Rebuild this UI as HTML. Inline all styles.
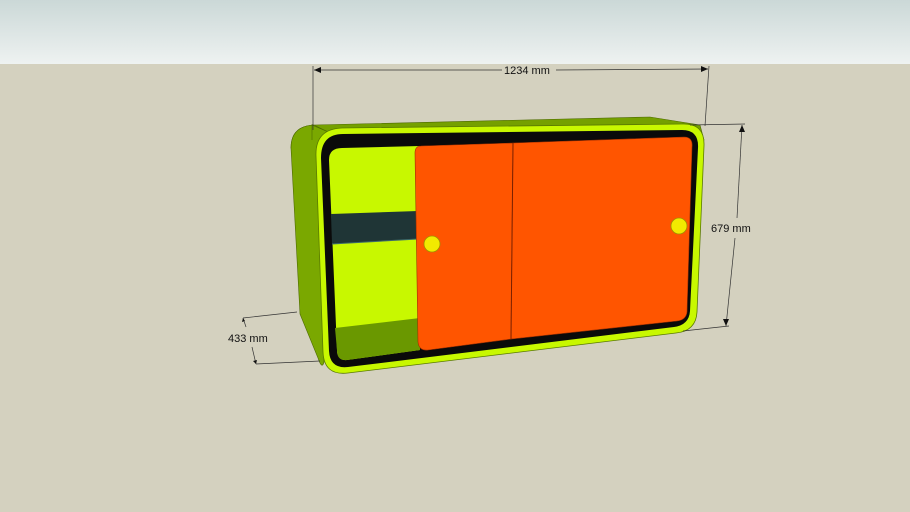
<!DOCTYPE html>
<html><head><meta charset="utf-8"><style>
html,body{margin:0;padding:0;width:910px;height:512px;overflow:hidden;background:#d4d1bf}
svg{display:block}
text{font-family:"Liberation Sans","DejaVu Sans",sans-serif;font-size:11px;fill:#111}
</style></head><body>
<svg width="910" height="512" viewBox="0 0 910 512">
<defs>
<linearGradient id="sky" x1="0" y1="0" x2="0" y2="1">
<stop offset="0" stop-color="#cbd8d7"/><stop offset="1" stop-color="#eef2f1"/>
</linearGradient>
</defs>
<rect x="0" y="0" width="910" height="64" fill="url(#sky)"/>
<rect x="0" y="64" width="910" height="448" fill="#d4d1bf"/>

<!-- top face -->
<path d="M291,148 Q291,126 314,125 L650,117 L700,125 L704,140 L316,140 Z" fill="#75a000" stroke="#4d6a00" stroke-width="0.6"/>
<!-- left side face -->
<path d="M291,148 Q291,126 314,125 L330,133 L318,150 L324,362 Q322,370 318,358 L300,314 Z" fill="#7aa800" stroke="#4d6a00" stroke-width="0.6"/>
<line x1="312" y1="124" x2="312" y2="140" stroke="#4d6a00" stroke-width="0.6"/>
<line x1="312" y1="125" x2="333" y2="134" stroke="#4d6a00" stroke-width="0.6"/>

<!-- front frame -->
<path d="M316,156 Q315,129 342,128 L682,124 Q705,123 704,146 L697,312 Q696,331 676,333 L348,373 Q324,376 323,352 Z" fill="#c8f800" stroke="#5a7a00" stroke-width="0.8"/>
<!-- black band -->
<path d="M321,158 Q321,134 343,134 L682,130 Q699,130 698,148 L690,311 Q689,325 674,327 L348,367 Q330,369 329,351 Z" fill="#0a0a0a"/>
<!-- interior -->
<path d="M329,160 Q329,148 342,148 L420,146 L420,350 L347,360 Q337,361 337,350 Z" fill="#c8f800"/>
<!-- bottom shelf interior -->
<path d="M335,328 L420,318 L420,350 L347,360 Q337,361 337,350 Z" fill="#6a9800"/>
<!-- dark shelf band -->
<path d="M331,214 L418,211 L418,239 L332,244 Z" fill="#1f3536"/>
<line x1="332" y1="244" x2="418" y2="239" stroke="#3d6b6b" stroke-width="1"/>

<!-- door 1 -->
<path d="M421,146 L513,143 L511,339 L428,350 Q419,351 418,342 L415,153 Q415,146 421,146 Z" fill="#ff5500" stroke="#a03000" stroke-width="0.6"/>
<!-- door 2 -->
<path d="M513,143 L684,137 Q693,137 692,147 L687,312 Q686,320 677,321 L511,339 Z" fill="#ff5500" stroke="#a03000" stroke-width="0.6"/>
<line x1="513" y1="143" x2="511" y2="339" stroke="#7a2000" stroke-width="1"/>

<!-- knobs -->
<circle cx="432" cy="244" r="8" fill="#f2ea00" stroke="#a09000" stroke-width="0.8"/>
<circle cx="679" cy="226" r="8" fill="#f2ea00" stroke="#a09000" stroke-width="0.8"/>

<!-- dimension 1234 -->
<g stroke="#333" stroke-width="0.7" fill="none">
<line x1="313" y1="66" x2="313" y2="130"/>
<line x1="709" y1="66" x2="705" y2="126"/>
<line x1="314" y1="70" x2="502" y2="70"/>
<line x1="556" y1="70" x2="708" y2="69"/>
<line x1="690" y1="125" x2="745" y2="124"/>
<line x1="683" y1="331" x2="729" y2="326"/>
<line x1="742" y1="125" x2="737" y2="218"/>
<line x1="735" y1="238" x2="726" y2="326"/>
<line x1="297" y1="312" x2="243" y2="318"/>
<line x1="320" y1="361" x2="256" y2="364"/>
<line x1="243" y1="318" x2="246" y2="327"/>
<line x1="252" y1="347" x2="256" y2="364"/>
</g>
<g fill="#111">
<path d="M314,70 L321,67 L321,73 Z"/>
<path d="M708,69 L701,66 L701,72 Z"/>
<path d="M742,125 L739,132 L745,132 Z"/>
<path d="M726,326 L723,319 L729,319 Z"/>
<path d="M243,318 L242,322 L245,321 Z"/>
<path d="M256,364 L253,361 L257,360 Z"/>
</g>
<text x="504" y="74">1234 mm</text>
<text x="711" y="232">679 mm</text>
<text x="228" y="342">433 mm</text>
</svg>
</body></html>
